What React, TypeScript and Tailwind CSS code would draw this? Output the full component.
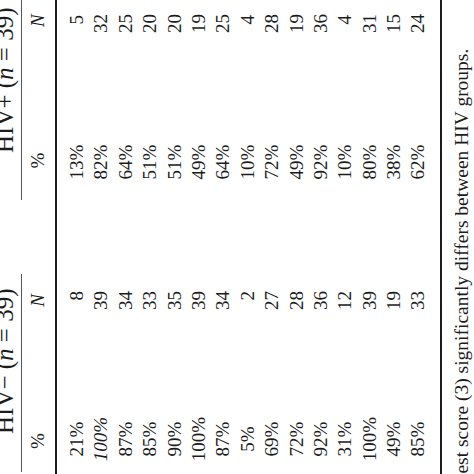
import React from "react";

const rows: { a: string; ai?: boolean; an: string; b: string; bn: string }[] = [
  { a: "21%", an: "8", b: "13%", bn: "5" },
  { a: "100%", ai: true, an: "39", b: "82%", bn: "32" },
  { a: "87%", an: "34", b: "64%", bn: "25" },
  { a: "85%", an: "33", b: "51%", bn: "20" },
  { a: "90%", an: "35", b: "51%", bn: "20" },
  { a: "100%", an: "39", b: "49%", bn: "19" },
  { a: "87%", an: "34", b: "64%", bn: "25" },
  { a: "5%", an: "2", b: "10%", bn: "4" },
  { a: "69%", an: "27", b: "72%", bn: "28" },
  { a: "72%", an: "28", b: "49%", bn: "19" },
  { a: "92%", an: "36", b: "92%", bn: "36" },
  { a: "31%", an: "12", b: "10%", bn: "4" },
  { a: "100%", an: "39", b: "80%", bn: "31" },
  { a: "49%", an: "19", b: "38%", bn: "15" },
  { a: "85%", an: "33", b: "62%", bn: "24" },
];

export default function App() {
  return (
    <div className="w-[474px] h-[474px] overflow-hidden bg-white">
      <div className="w-[474px] h-[474px] -rotate-90 bg-white text-[#1c1c1c] font-['Liberation_Serif','Times_New_Roman',serif]">
        {/* group headers */}
        <div className="flex h-[21px] text-[25px] leading-[9px] whitespace-nowrap">
          <div className="w-[40px] shrink-0" />
          <div className="w-[281px] shrink-0">
            HIV− (<i>n</i> = 39)
          </div>
          <div className="shrink-0">
            HIV+ (<i>n</i> = 39)
          </div>
        </div>
        {/* group underlines */}
        <div className="flex h-px">
          <div className="ml-[2px] w-[198px] bg-[#555]" />
          <div className="ml-[74px] flex-1 bg-[#555]" />
        </div>
        {/* sub headers */}
        <div className="flex h-[33px] text-[19px] leading-[31px]">
          <div className="w-[66px] shrink-0 text-center">%</div>
          <div className="w-[114px] shrink-0 text-right italic">N</div>
          <div className="w-[267px] shrink-0 text-center">%</div>
          <div className="w-[12px] shrink-0 text-right italic">N</div>
        </div>
        <div className="h-[2px] bg-[#1c1c1c]" />
        {/* data */}
        <div className="pt-[8px] text-[19px] leading-[24.4px]">
          {rows.map((r, i) => (
            <div key={i} className="flex h-[24.4px] whitespace-nowrap">
              <div className={`w-[70px] shrink-0 text-center ${r.ai ? "italic" : ""}`}>{r.a}</div>
              <div className="w-[113px] shrink-0 text-right">{r.an}</div>
              <div className="w-[258px] shrink-0 text-center">{r.b}</div>
              <div className="w-[18px] shrink-0 text-right">{r.bn}</div>
            </div>
          ))}
        </div>
        <div className="mt-[9px] h-[2px] bg-[#1c1c1c]" />
        <div className="mt-[8px] ml-[-5px] text-[19.5px] leading-[24px] whitespace-nowrap">
          test score (3) significantly differs between HIV groups.
        </div>
      </div>
    </div>
  );
}
